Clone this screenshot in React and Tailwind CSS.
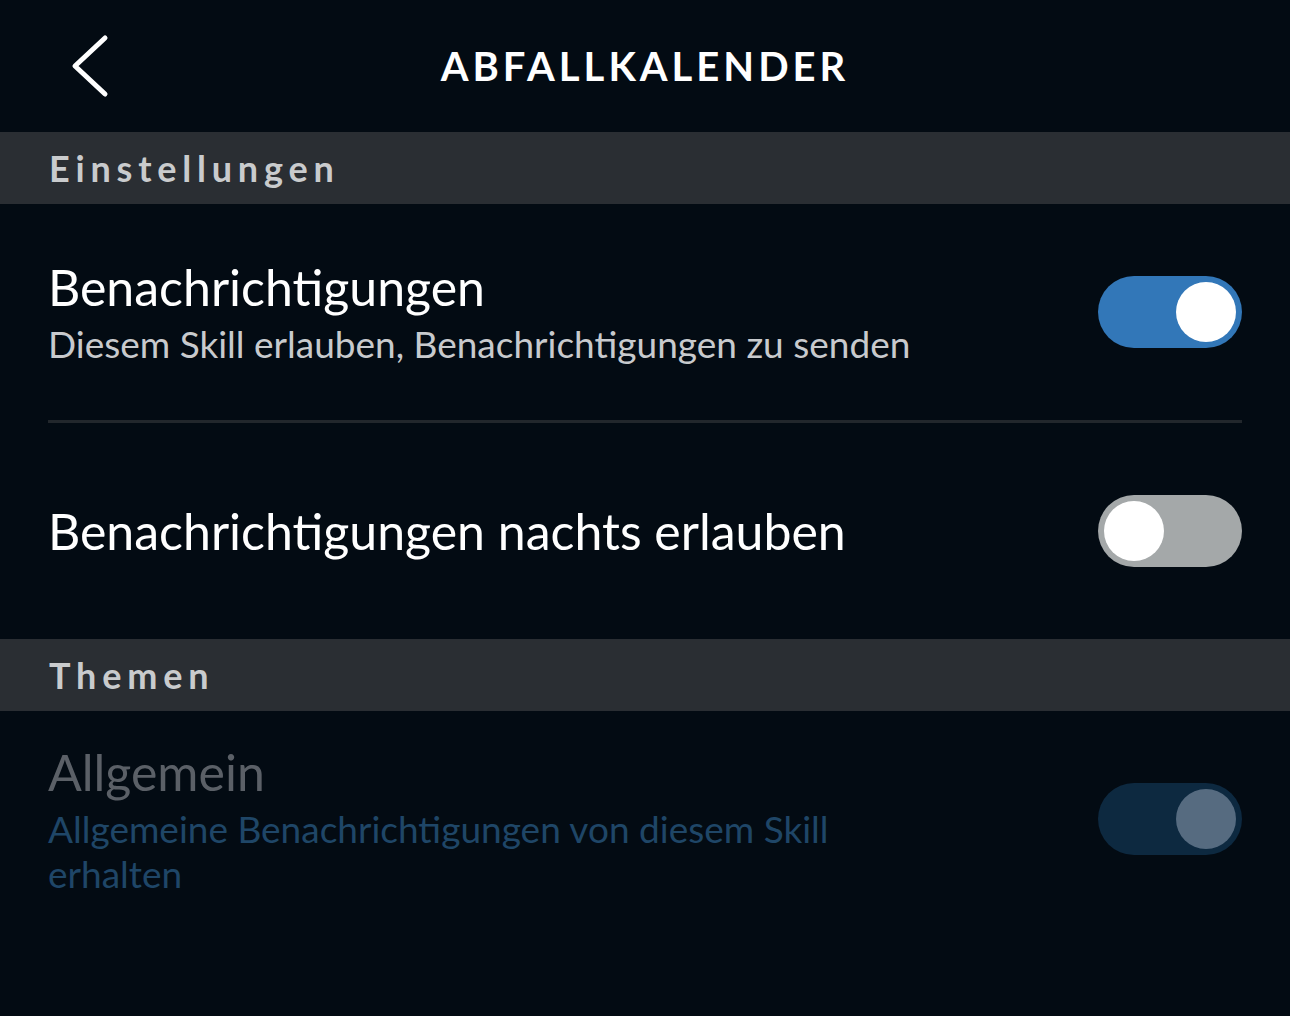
import React from "react";

const Toggle = ({ on, disabled }) => {
  const track = disabled
    ? "bg-[#0d2940]"
    : on
    ? "bg-[#3277b8]"
    : "bg-[#a4a8a9]";
  const knob = disabled ? "bg-[#566b80]" : "bg-white";
  return (
    <div
      className={`w-[144px] h-[72px] rounded-full flex items-center px-[6px] shrink-0 ${track} ${
        on ? "justify-end" : "justify-start"
      }`}
    >
      <div className={`w-[60px] h-[60px] rounded-full ${knob}`} />
    </div>
  );
};

const SectionBar = ({ children }) => (
  <div className="h-[72px] bg-[#2a2e33] flex items-center px-[49px]">
    <span className="text-[36px] font-bold tracking-[5.8px] text-[#c9cbcd]">
      {children}
    </span>
  </div>
);

const SettingRow = ({ title, subtitle, on, disabled, divider }) => (
  <div className="px-[48px]">
    <div className="min-h-[216px] flex items-center justify-between gap-8">
      <div className="max-w-[890px]">
        <div
          className={`text-[50px] leading-[58px] ${
            disabled ? "text-[#5b6067]" : "text-white"
          }`}
        >
          {title}
        </div>
        {subtitle && (
          <div
            className={`text-[37px] leading-[45px] mt-[5px] ${
              disabled ? "text-[#1f4667]" : "text-[#c8cacd]"
            }`}
          >
            {subtitle}
          </div>
        )}
      </div>
      <Toggle on={on} disabled={disabled} />
    </div>
    {divider && <div className="h-[3px] bg-[#22272c]" />}
  </div>
);

export default function App() {
  return (
    <div
      className="w-[1290px] h-[1016px] bg-[#030b13] overflow-hidden"
      style={{ fontFamily: "Lato, 'Noto Sans', sans-serif" }}
    >
      {/* HEADER */}
      <div className="h-[132px] grid grid-cols-[1fr_auto_1fr] items-center">
        <div className="pl-[70px] flex items-center">
          <svg width="40" height="64" viewBox="0 0 40 64" fill="none">
            <path
              d="M35 4 L5 32 L35 60"
              stroke="white"
              strokeWidth="5"
              strokeLinecap="round"
              strokeLinejoin="round"
            />
          </svg>
        </div>
        <h1 className="text-[40px] font-bold tracking-[4px] text-white">
          ABFALLKALENDER
        </h1>
        <div />
      </div>

      {/* EINSTELLUNGEN */}
      <SectionBar>Einstellungen</SectionBar>
      <SettingRow
        title="Benachrichtigungen"
        subtitle="Diesem Skill erlauben, Benachrichtigungen zu senden"
        on
        divider
      />
      <SettingRow title="Benachrichtigungen nachts erlauben" />

      {/* THEMEN */}
      <SectionBar>Themen</SectionBar>
      <SettingRow
        title="Allgemein"
        subtitle="Allgemeine Benachrichtigungen von diesem Skill erhalten"
        on
        disabled
      />
    </div>
  );
}
